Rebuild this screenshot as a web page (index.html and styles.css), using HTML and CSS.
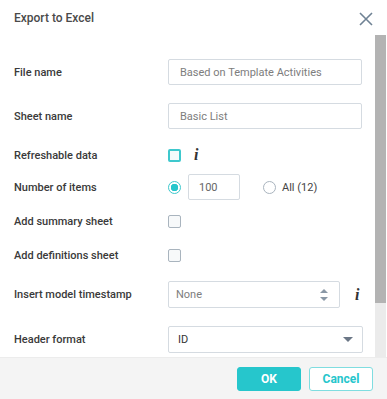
FILE: index.html
```html
<!DOCTYPE html>
<html>
<head>
  <title>Export to Excel</title>
  <link rel="stylesheet" href="styles.css">
</head>
<body>
  <div class="dialog">
    <div class="dialog-header">
      <span class="title">Export to Excel</span>
      <button class="close" type="button">
        <svg width="14" height="14" viewBox="0 0 14 14"><path d="M1 1 L13 13 M13 1 L1 13" stroke="#6f8294" stroke-width="1.6" fill="none"/></svg>
      </button>
    </div>

    <div class="dialog-body">
      <div class="content">
        <div class="row gap-lg">
          <label>File name</label>
          <input class="field wide" type="text" placeholder="Based on Template Activities">
        </div>
        <div class="row gap-md">
          <label>Sheet name</label>
          <input class="field wide" type="text" placeholder="Basic List">
        </div>
        <div class="row gap-xs">
          <label>Refreshable data</label>
          <span class="check active"></span>
          <span class="info">i</span>
        </div>
        <div class="row gap-sm">
          <label>Number of items</label>
          <span class="radio checked"></span>
          <input class="field small" type="text" value="100">
          <span class="radio"></span>
          <span class="opt">All (12)</span>
        </div>
        <div class="row gap-sm">
          <label>Add summary sheet</label>
          <span class="check"></span>
        </div>
        <div class="row gap-md">
          <label>Add definitions sheet</label>
          <span class="check"></span>
        </div>
        <div class="row gap-lg tall">
          <label>Insert model timestamp</label>
          <div class="field spin">
            <span class="muted">None</span>
            <svg width="10" height="14" viewBox="0 0 10 14"><path d="M1 5 L5 1 L9 5 Z M1 9 L9 9 L5 13 Z" fill="#8a98a6"/></svg>
          </div>
          <span class="info">i</span>
        </div>
        <div class="row tall">
          <label>Header format</label>
          <div class="field select">
            <span>ID</span>
            <svg width="10" height="6" viewBox="0 0 10 6"><path d="M0 0 L10 0 L5 5 Z" fill="#6b7786"/></svg>
          </div>
        </div>
      </div>
      <div class="scrollbar"><div class="thumb"></div></div>
    </div>

    <div class="dialog-footer">
      <button class="btn primary" type="button">OK</button>
      <button class="btn secondary" type="button">Cancel</button>
    </div>
  </div>
</body>
</html>
```

FILE: styles.css
```css
html, body {
  margin: 0;
  padding: 0;
}
body {
  font-family: Roboto, "Liberation Sans", Arial, sans-serif;
  color: #333;
  background: #fff;
}
.dialog {
  width: 387px;
  height: 399px;
  display: flex;
  flex-direction: column;
}
.dialog-header {
  height: 35px;
  display: flex;
  align-items: center;
  justify-content: space-between;
  padding: 0 14px;
  flex-shrink: 0;
}
.title {
  font-size: 12px;
  font-weight: 500;
  color: #4a4a4a;
}
.close {
  border: none;
  background: none;
  padding: 0;
  width: 14px;
  height: 14px;
  margin-top: 2px;
}
.dialog-body {
  flex: 1;
  display: flex;
  overflow: hidden;
  padding-right: 1px;
}
.content {
  flex: 1;
  overflow: hidden;
  padding: 24px 0 0 14px;
}
.scrollbar {
  width: 11px;
  background: #ebebeb;
}
.thumb {
  height: 268px;
  background: #b3b3b3;
}
.row {
  display: flex;
  align-items: center;
  height: 26px;
}
.row.tall {
  height: 27px;
}
.gap-xs { margin-bottom: 6px; }
.gap-sm { margin-bottom: 8px; }
.gap-md { margin-bottom: 13px; }
.gap-lg { margin-bottom: 18px; }
label {
  width: 154px;
  flex-shrink: 0;
  font-size: 11px;
  font-weight: 500;
  color: #3a3a3a;
}
.field {
  box-sizing: border-box;
  height: 100%;
  border: 1px solid #d5dbe1;
  border-radius: 2px;
  font-family: inherit;
  font-size: 11px;
  color: #666;
  padding: 0 11px;
  background: #fff;
  outline: none;
}
.field::placeholder {
  color: #7d7d7d;
}
.wide {
  width: 194px;
}
.small {
  width: 52px;
  margin-left: 7px;
  margin-right: 23px;
  padding-left: 10px;
}
.spin, .select {
  display: flex;
  align-items: center;
  justify-content: space-between;
}
.spin {
  width: 172px;
  padding: 0 10px 0 7px;
}
.select {
  width: 195px;
  padding: 0 9px 0 9px;
  color: #333;
}
.muted {
  color: #7d7d7d;
}
.check {
  box-sizing: border-box;
  width: 13px;
  height: 13px;
  border: 1.5px solid #a9b4be;
  border-radius: 2px;
  background: #f7f9fa;
}
.check.active {
  border: 2px solid #3ec8cd;
  background: #f5fbfb;
}
.info {
  font-family: "Liberation Serif", serif;
  font-style: italic;
  font-weight: bold;
  font-size: 16px;
  color: #333;
  margin-left: 13px;
}
.spin + .info {
  margin-left: 15px;
}
.radio {
  box-sizing: border-box;
  width: 13px;
  height: 13px;
  border-radius: 50%;
  border: 1.5px solid #a9b4be;
  background: #fff;
}
.radio.checked {
  border: 1.5px solid #3ec8cd;
  background: radial-gradient(circle, #26c6cc 0 3.5px, #fff 4px);
}
.opt {
  font-size: 11px;
  color: #444;
  margin-left: 6px;
}
.dialog-footer {
  height: 42px;
  flex-shrink: 0;
  background: #f4f4f4;
  border-top: 1px solid #ececec;
  box-sizing: border-box;
  display: flex;
  align-items: center;
  justify-content: flex-end;
  gap: 8px;
  padding: 0 14px;
}
.btn {
  height: 24px;
  width: 64px;
  border-radius: 3px;
  font-family: inherit;
  font-size: 12px;
  font-weight: bold;
  padding: 0;
}
.primary {
  background: #26c6cc;
  border: 1px solid #26c6cc;
  color: #fff;
}
.secondary {
  background: #fff;
  border: 1.5px solid #7fdde0;
  color: #26c6cc;
}
```
